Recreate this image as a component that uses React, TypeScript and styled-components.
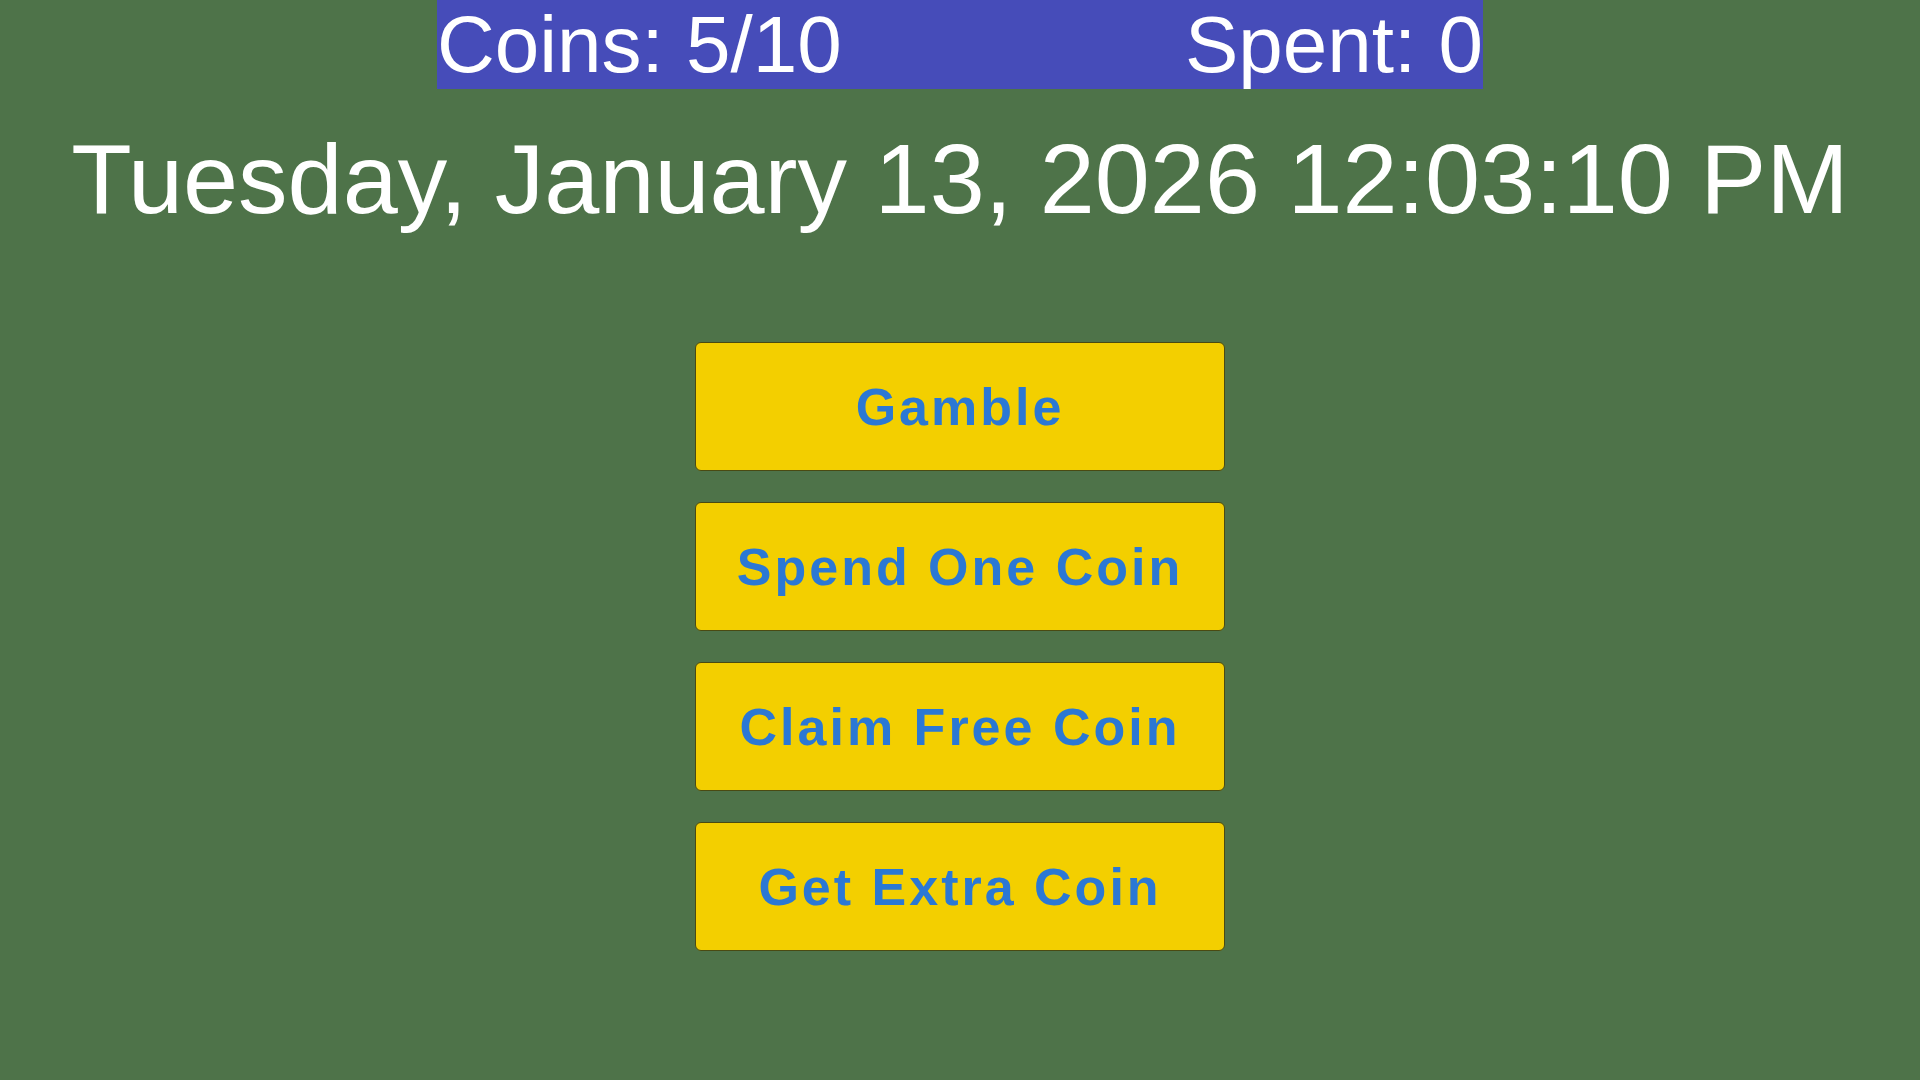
import React from "react";
import styled, { createGlobalStyle } from "styled-components";

const GlobalStyle = createGlobalStyle`
  html, body {
    margin: 0;
    padding: 0;
    background-color: #4e7349;
    font-family: "Liberation Sans", Arial, sans-serif;
  }
`;

const Page = styled.div`
  min-height: 100vh;
  display: flex;
  flex-direction: column;
  align-items: center;
  color: #ffffff;
`;

const StatusBar = styled.div`
  width: 1046px;
  height: 89px;
  background-color: #464cb9;
  display: flex;
  justify-content: space-between;
  align-items: center;
  font-size: 80px;
  line-height: 89px;
`;

const Clock = styled.h1`
  margin: 33px 0 0;
  font-size: 99px;
  font-weight: 400;
  line-height: normal;
  text-align: center;
`;

const ButtonList = styled.div`
  margin-top: 106px;
  display: flex;
  flex-direction: column;
  gap: 31px;
`;

const ActionButton = styled.button`
  width: 530px;
  height: 129px;
  background-color: #f3cf00;
  color: #2b78d4;
  border: 1px solid #4a4a12;
  border-radius: 6px;
  font-family: "Liberation Sans", Arial, sans-serif;
  font-size: 52px;
  font-weight: 700;
  letter-spacing: 3px;
  cursor: pointer;
  padding: 0;
`;

const actions = ["Gamble", "Spend One Coin", "Claim Free Coin", "Get Extra Coin"];

export default function App() {
  return (
    <>
      <GlobalStyle />
      <Page>
        <StatusBar>
          <span>Coins: 5/10</span>
          <span>Spent: 0</span>
        </StatusBar>
        <Clock>Tuesday, January 13, 2026 12:03:10 PM</Clock>
        <ButtonList>
          {actions.map((label) => (
            <ActionButton key={label}>{label}</ActionButton>
          ))}
        </ButtonList>
      </Page>
    </>
  );
}
